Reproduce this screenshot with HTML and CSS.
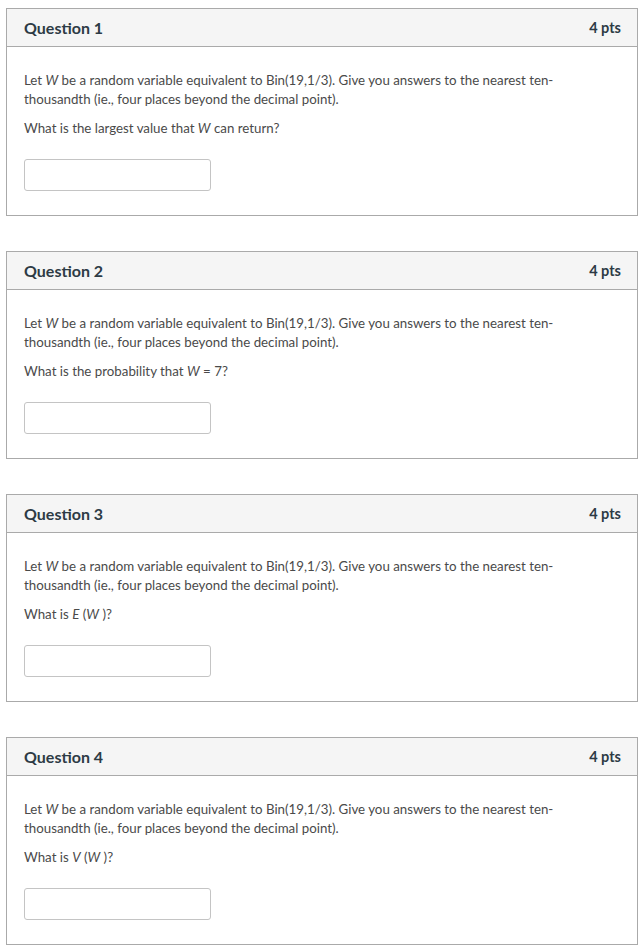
FILE: index.html
```html
<!DOCTYPE html>
<html>
<head>
<meta charset="utf-8">
<link rel="stylesheet" href="styles.css">
</head>
<body>
<div class="quiz">
  <section class="question">
    <header class="q-head"><span class="q-title">Question 1</span><span class="q-pts">4 pts</span></header>
    <div class="q-body">
      <p>Let <i>W</i> be a random variable equivalent to Bin(19,1/3). Give you answers to the nearest ten-<br>thousandth (ie., four places beyond the decimal point).</p>
      <p>What is the largest value that <i>W</i> can return?</p>
      <div class="answer"></div>
    </div>
  </section>
  <section class="question">
    <header class="q-head"><span class="q-title">Question 2</span><span class="q-pts">4 pts</span></header>
    <div class="q-body">
      <p>Let <i>W</i> be a random variable equivalent to Bin(19,1/3). Give you answers to the nearest ten-<br>thousandth (ie., four places beyond the decimal point).</p>
      <p>What is the probability that <i>W</i> = 7?</p>
      <div class="answer"></div>
    </div>
  </section>
  <section class="question">
    <header class="q-head"><span class="q-title">Question 3</span><span class="q-pts">4 pts</span></header>
    <div class="q-body">
      <p>Let <i>W</i> be a random variable equivalent to Bin(19,1/3). Give you answers to the nearest ten-<br>thousandth (ie., four places beyond the decimal point).</p>
      <p>What is <i>E</i> (<i>W</i> )?</p>
      <div class="answer"></div>
    </div>
  </section>
  <section class="question">
    <header class="q-head"><span class="q-title">Question 4</span><span class="q-pts">4 pts</span></header>
    <div class="q-body">
      <p>Let <i>W</i> be a random variable equivalent to Bin(19,1/3). Give you answers to the nearest ten-<br>thousandth (ie., four places beyond the decimal point).</p>
      <p>What is <i>V</i> (<i>W</i> )?</p>
      <div class="answer"></div>
    </div>
  </section>
</div>
</body>
</html>
```
FILE: styles.css
```css
html, body {
  background: #ffffff;
}
body {
  margin: 8px 3px 0 6px;
  font-family: Lato, "Liberation Sans", sans-serif;
  color: #2d3b45;
}
.quiz {
  display: flex;
  flex-direction: column;
  gap: 35px;
}
.question {
  border: 1px solid #aaaaaa;
  height: 208px;
  box-sizing: border-box;
}
.q-head {
  display: flex;
  justify-content: space-between;
  align-items: center;
  height: 38px;
  box-sizing: border-box;
  padding: 0 16px 0 17px;
  background: #f5f5f5;
  border-bottom: 1px solid #aaaaaa;
}
.q-title {
  font-size: 16px;
  font-weight: 700;
  color: #2d3b45;
}
.q-pts {
  font-size: 14.5px;
  font-weight: 700;
  color: #2d3b45;
}
.q-body {
  padding: 24px 17px 0;
  font-size: 13.3px;
  line-height: 19px;
  color: #4a4a4a;
}
.q-body p {
  margin: 0 0 10px;
}
.answer {
  margin-top: 21px;
  width: 187px;
  height: 32px;
  box-sizing: border-box;
  border: 1px solid #c4c4c4;
  border-radius: 3px;
  background: #fff;
}
```
